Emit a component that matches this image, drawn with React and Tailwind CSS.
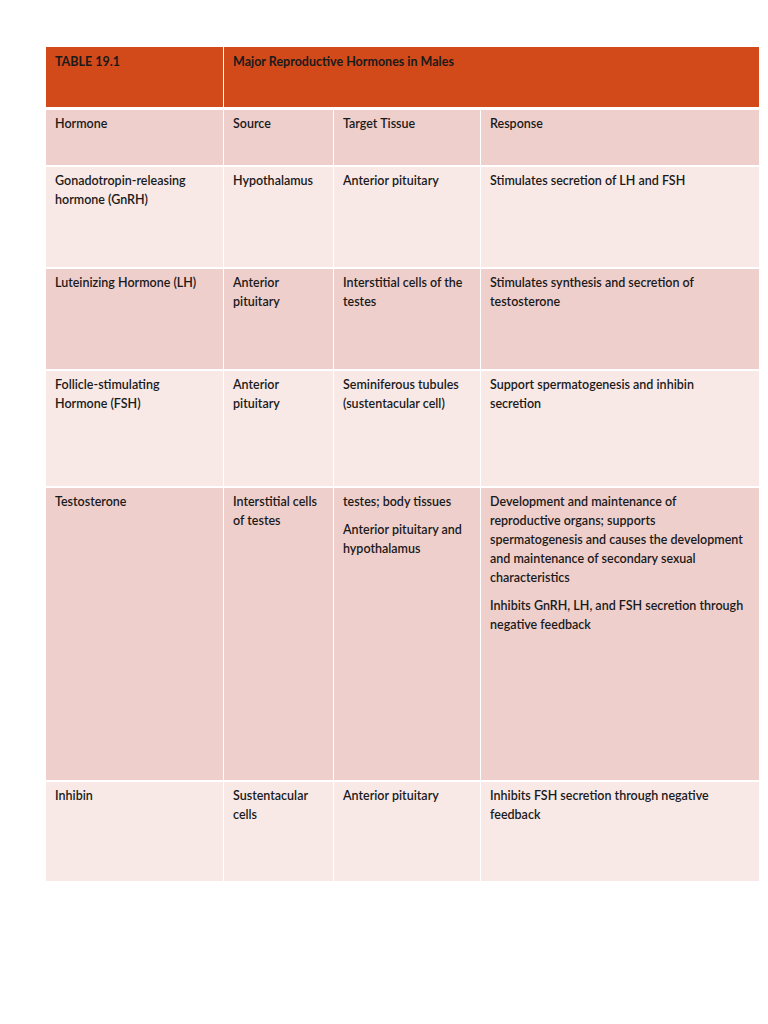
// each cell: list of paragraphs, each paragraph: list of lines (wrapped as in the print)
const rows = [
  {
    h: 'h-[100px]',
    bg: 'bg-[#f8e8e6]',
    cells: [
      [['Gonadotropin-releasing', 'hormone (GnRH)']],
      [['Hypothalamus']],
      [['Anterior pituitary']],
      [['Stimulates secretion of LH and FSH']],
    ],
  },
  {
    h: 'h-[100px]',
    bg: 'bg-[#efcfcc]',
    cells: [
      [['Luteinizing Hormone (LH)']],
      [['Anterior', 'pituitary']],
      [['Interstitial cells of the', 'testes']],
      [['Stimulates synthesis and secretion of', 'testosterone']],
    ],
  },
  {
    h: 'h-[115px]',
    bg: 'bg-[#f8e8e6]',
    cells: [
      [['Follicle-stimulating', 'Hormone (FSH)']],
      [['Anterior', 'pituitary']],
      [['Seminiferous tubules', '(sustentacular cell)']],
      [['Support spermatogenesis and inhibin', 'secretion']],
    ],
  },
  {
    h: 'h-[292px]',
    bg: 'bg-[#efcfcc]',
    cells: [
      [['Testosterone']],
      [['Interstitial cells', 'of testes']],
      [['testes; body tissues'], ['Anterior pituitary and', 'hypothalamus']],
      [
        [
          'Development and maintenance of',
          'reproductive organs; supports',
          'spermatogenesis and causes the development',
          'and maintenance of secondary sexual',
          'characteristics',
        ],
        ['Inhibits GnRH, LH, and FSH secretion through', 'negative feedback'],
      ],
    ],
  },
  {
    h: 'h-[99px]',
    bg: 'bg-[#f8e8e6]',
    cells: [
      [['Inhibin']],
      [['Sustentacular', 'cells']],
      [['Anterior pituitary']],
      [['Inhibits FSH secretion through negative', 'feedback']],
    ],
  },
];

const cols = 'grid grid-cols-[177px_109px_146px_278px] gap-x-[1px]';

function Cell({ paras, className = '' }) {
  return (
    <div className={`pl-[9px] pt-[4px] whitespace-nowrap overflow-hidden ${className}`}>
      {paras.map((lines, i) => (
        <p key={i} className={i > 0 ? 'mt-[9px]' : ''}>
          {lines.map((l, k) => (
            <span key={k} className="block">{l}</span>
          ))}
        </p>
      ))}
    </div>
  );
}

export default function App() {
  return (
    <div
      className="min-h-[1024px] w-[768px] bg-white pt-[47px] pl-[46px] text-[12.5px] leading-[19px] text-[#1a1a1a]"
      style={{ fontFamily: 'Lato, "Open Sans", sans-serif' }}
    >
      <div className="w-[713px] font-semibold">
        <div className="grid grid-cols-[177px_535px] gap-x-[1px] h-[60px] mb-[3px]">
          <div className="bg-[#d24a1a] pl-[9px] pt-[5px] font-bold">TABLE 19.1</div>
          <div className="bg-[#d24a1a] pl-[9px] pt-[5px] font-bold">Major Reproductive Hormones in Males</div>
        </div>
        <div className={`${cols} h-[55px] mb-[2px]`}>
          {['Hormone', 'Source', 'Target Tissue', 'Response'].map(t => (
            <Cell key={t} paras={[[t]]} className="bg-[#efcfcc]" />
          ))}
        </div>
        {rows.map((r, i) => (
          <div key={i} className={`${cols} ${r.h} mb-[2px]`}>
            {r.cells.map((c, j) => (
              <Cell key={j} paras={c} className={r.bg} />
            ))}
          </div>
        ))}
      </div>
    </div>
  );
}
